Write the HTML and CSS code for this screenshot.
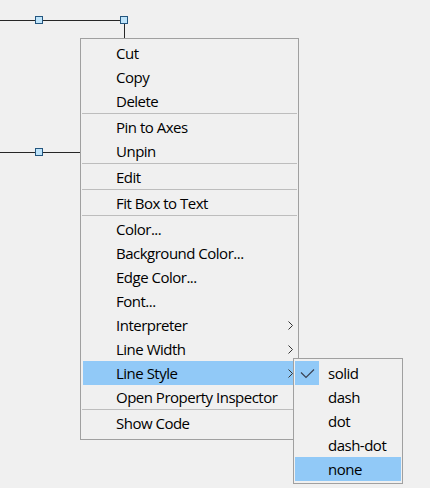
FILE: index.html
```html
<!DOCTYPE html>
<html lang="en">
  <head>
    <meta charset="UTF-8" />
    <meta name="viewport" content="width=device-width, initial-scale=1.0" />
    <title>Text Box Menu</title>
    <link rel="stylesheet" href="styles.css">
  </head>

  <body>
    <!-- figure canvas: annotation lines with their selection handles -->
    <svg class="canvas" width="430" height="488" viewBox="0 0 430 488">
      <path d="M0 20.5H124.5V38" class="edge" />
      <path d="M0 152.5H80" class="edge" />
      <rect x="35.5" y="16.5" width="7" height="7" class="handle" />
      <rect x="120.5" y="16.5" width="7" height="7" class="handle" />
      <rect x="35.5" y="148.5" width="7" height="7" class="handle" />
    </svg>

    <div class="menu" id="context-menu">
      <div class="item">Cut</div>
      <div class="item">Copy</div>
      <div class="item">Delete</div>
      <div class="sep"></div>
      <div class="item">Pin to Axes</div>
      <div class="item">Unpin</div>
      <div class="sep"></div>
      <div class="item">Edit</div>
      <div class="sep"></div>
      <div class="item">Fit Box to Text</div>
      <div class="sep"></div>
      <div class="item">Color...</div>
      <div class="item">Background Color...</div>
      <div class="item">Edge Color...</div>
      <div class="item">Font...</div>
      <div class="item">Interpreter<svg class="arrow" width="5" height="9" viewBox="0 0 5 9"><path d="M0.5 0.5L4.5 4.5L0.5 8.5" /></svg></div>
      <div class="item">Line Width<svg class="arrow" width="5" height="9" viewBox="0 0 5 9"><path d="M0.5 0.5L4.5 4.5L0.5 8.5" /></svg></div>
      <div class="item active">Line Style<svg class="arrow" width="5" height="9" viewBox="0 0 5 9"><path d="M0.5 0.5L4.5 4.5L0.5 8.5" /></svg></div>
      <div class="item">Open Property Inspector</div>
      <div class="sep"></div>
      <div class="item">Show Code</div>
    </div>

    <div class="menu" id="style-menu">
      <div class="item checked">
        <span class="check"><svg width="24" height="24" viewBox="0 0 24 24"><path d="M6 11.5L11 16.5L19 8.5" /></svg></span>solid
      </div>
      <div class="item">dash</div>
      <div class="item">dot</div>
      <div class="item">dash-dot</div>
      <div class="item active">none</div>
    </div>
  </body>
</html>
```

FILE: styles.css
```css
body {
  margin: 0;
  width: 430px;
  height: 488px;
  overflow: hidden;
  position: relative;
  background: #f0f0f0;
  font-family: "Open Sans", "Noto Sans", sans-serif;
  font-size: 15px;
  letter-spacing: -0.5px;
  color: #000;
}

.canvas {
  position: absolute;
  left: 0;
  top: 0;
}

.canvas .edge {
  fill: none;
  stroke: #262626;
  stroke-width: 1;
}

.canvas .handle {
  fill: #bfe4fa;
  stroke: #24567f;
  stroke-width: 1;
}

.menu {
  position: absolute;
  box-sizing: border-box;
  display: flex;
  flex-direction: column;
  background: #f0f0f0;
  border: 1px solid #a0a0a0;
}

#context-menu {
  left: 80px;
  top: 38px;
  width: 219px;
  padding: 2px 2px 4px 2px;
}

#style-menu {
  left: 293px;
  top: 358px;
  width: 110px;
  height: 126px;
  padding: 2px 1px 1px 1px;
}

.item {
  height: 24px;
  line-height: 24px;
  padding-left: 33px;
  padding-right: 3px;
  display: flex;
  align-items: center;
  justify-content: space-between;
  white-space: nowrap;
}

.item.active {
  background: #91c9f7;
}

.item .arrow path {
  fill: none;
  stroke: #333;
  stroke-width: 1;
}

.item.checked {
  padding-left: 0;
  justify-content: flex-start;
}

.check {
  width: 24px;
  height: 24px;
  margin-right: 9px;
  background: #91c9f7;
}

.check svg {
  display: block;
}

.check path {
  fill: none;
  stroke: #3a4253;
  stroke-width: 1.2;
}

.sep {
  height: 1px;
  margin: 0 -1px 1px -1px;
  background: #bdbdbd;
}
```
